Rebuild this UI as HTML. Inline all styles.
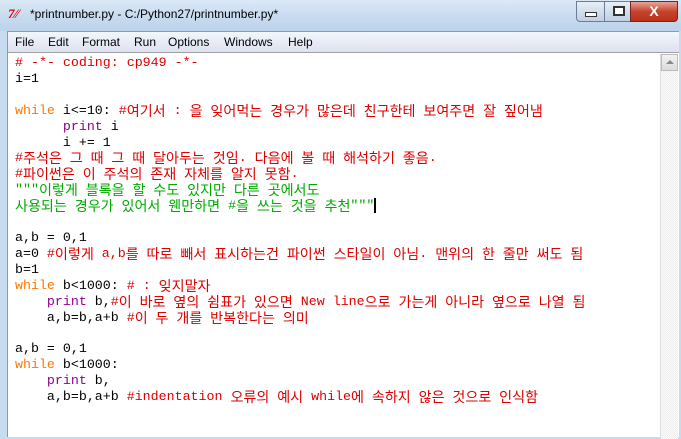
<!DOCTYPE html>
<html><head><meta charset="utf-8"><style>
body{margin:0;width:681px;height:436px;overflow:hidden;background:#c9dcef;font-family:"Liberation Sans",sans-serif;position:relative}
.title{position:absolute;left:0;top:0;width:681px;height:31px;background:linear-gradient(#dbe9f7,#c6d9ee 60%,#bcd3ec)}
.tt{position:absolute;left:30px;top:7px;font-size:12px;color:#000}
.logo{position:absolute;left:8px;top:6px;font:italic bold 13px "Liberation Serif",serif;color:#d00}
.btns{position:absolute;left:576px;top:1px;height:19px;width:112px}
.b{position:absolute;top:0;height:19px;border:1px solid #6b7d96;background:linear-gradient(#e6eef8,#c0cfe2)}
.frame{position:absolute;left:7px;top:31px;width:671px;height:405px;background:#fff;border-left:1px solid #8a99ad;border-top:1px solid #8a99ad}
.menu{position:absolute;left:0;top:0;width:671px;height:20px;background:linear-gradient(#f4f6fb,#dde2f1);border-bottom:1px solid #a0a0a0;font-size:12px}
.menu span{position:absolute;top:3px}
.ed{position:absolute;left:7px;top:23px;font:13.3px/15.9px "Liberation Mono","Noto Sans CJK KR",monospace;white-space:pre;color:#000}
.ed i{font-style:normal;font-size:14.1px;word-spacing:-0.6px;line-height:10px;position:relative;top:2px}
.c{color:#dd0000}.k{color:#ff7700}.p{color:#900090}.s{color:#00aa00}
.sb{position:absolute;left:652px;top:22px;width:17px;height:385px;background:repeating-conic-gradient(#eee 0 25%,#fafafa 0 50%) 0 0/2px 2px;border-left:1px solid #ddd}
.up{position:absolute;left:0;top:0;width:17px;height:17px;background:linear-gradient(#f2f2f2,#dcdcdc);border:1px solid #bbb;box-sizing:border-box}
</style></head><body>
<div class="title"><div class="logo">7⁄⁄</div><div class="tt">*printnumber.py - C:/Python27/printnumber.py*</div>
<div class="btns">
<div class="b" style="left:0;width:27px;border-radius:0 0 0 4px"><div style="position:absolute;left:8px;top:10px;width:10px;height:3px;border:1px solid #333;background:#fff"></div></div>
<div class="b" style="left:28px;width:25px"><div style="position:absolute;left:8px;top:4px;width:8px;height:6px;border:2px solid #333;background:#fff"></div></div>
<div class="b" style="left:54px;width:46px;border-radius:0 0 4px 0;background:linear-gradient(#e8a598,#c8432c 50%,#b83218);border-color:#7a2418;color:#fff;font:bold 14px 'Liberation Sans';text-align:center;line-height:18px">X</div>
</div></div>
<div class="frame">
<div class="menu"><span style="left:7px">File</span><span style="left:40px">Edit</span><span style="left:74px">Format</span><span style="left:126px">Run</span><span style="left:160px">Options</span><span style="left:216px">Windows</span><span style="left:280px">Help</span></div>
<div class="ed"><span class="c"># -*- coding: cp949 -*-</span>
i=1

<span class="k">while</span> i&lt;=10: <span class="c">#<i>여기서</i> : <i>을 잊어먹는 경우가 많은데 친구한테 보여주면 잘 짚어냄</i></span>
      <span class="p">print</span> i
      i += 1
<span class="c">#<i>주석은 그 때 그 때 달아두는 것임</i>. <i>다음에 볼 때 해석하기 좋음</i>.</span>
<span class="c">#<i>파이썬은 이 주석의 존재 자체를 알지 못함</i>.</span>
<span class="s">"""<i>이렇게 블록을 할 수도 있지만 다른 곳에서도</i></span>
<span class="s"><i>사용되는 경우가 있어서 웬만하면</i> #<i>을 쓰는 것을 추천</i>"""</span><span style="border-left:2px solid #000"></span>

a,b = 0,1
a=0 <span class="c">#<i>이렇게</i> a,b<i>를 따로 빼서 표시하는건 파이썬 스타일이 아님</i>. <i>맨위의 한 줄만 써도 됨</i></span>
b=1
<span class="k">while</span> b&lt;1000: <span class="c"># : <i>잊지말자</i></span>
    <span class="p">print</span> b,<span class="c">#<i>이 바로 옆의 쉼표가 있으면</i> New line<i>으로 가는게 아니라 옆으로 나열 됨</i></span>
    a,b=b,a+b <span class="c">#<i>이 두 개를 반복한다는 의미</i></span>

a,b = 0,1
<span class="k">while</span> b&lt;1000:
    <span class="p">print</span> b,
    a,b=b,a+b <span class="c">#indentation <i>오류의 예시</i> while<i>에 속하지 않은 것으로 인식함</i></span></div>
<div class="sb"><div class="up"><div style="position:absolute;left:4px;top:5px;border:4px solid transparent;border-bottom:4px solid #888;border-top:0"></div></div></div>
</div>
</body></html>
